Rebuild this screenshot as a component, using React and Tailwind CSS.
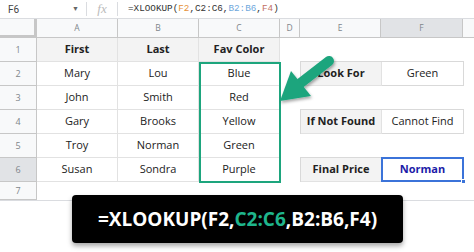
import React from "react"

const cols = ["A", "B", "C", "D", "E", "F"]
const colW = ["w-[81px]", "w-[81px]", "w-[81px]", "w-[20px]", "w-[81px]", "w-[82px]"]

const rows = [
  ["Mary", "Lou", "Blue"],
  ["John", "Smith", "Red"],
  ["Gary", "Brooks", "Yellow"],
  ["Troy", "Norman", "Green"],
  ["Susan", "Sondra", "Purple"],
]

const side = {
  0: ["Look For", "Green"],
  2: ["If Not Found", "Cannot Find"],
  4: ["Final Price", "Norman"],
}

const RowHead = ({ n, active }) => (
  <div
    className={`w-[37px] shrink-0 flex items-center justify-center text-[9px] text-[#80868b] border-r border-b border-[#c7c7c7] ${
      active ? "bg-[#e1e3e6]" : "bg-[#f8f9fa]"
    }`}
  >
    {n}
  </div>
)

const Cell = ({ w, bold, gray, children, className = "" }) => (
  <div
    className={`${w} shrink-0 flex items-center justify-center border-r border-b border-[#e2e2e2] ${
      gray ? "bg-[#f3f3f3]" : "bg-white"
    } ${bold ? "font-bold" : ""} ${className}`}
  >
    {children}
  </div>
)

export default function App() {
  return (
    <div className="relative w-[474px] h-[252px] overflow-hidden bg-white font-['Open_Sans',sans-serif] text-[11px] text-[#222]">
      {/* formula bar */}
      <div className="h-[19px] flex items-center border-b border-[#dadce0] text-[#444]">
        <div className="w-[86px] flex items-center justify-between pl-[8px] pr-[7px] font-['Roboto',sans-serif] text-[10px]">
          <span>F6</span>
          <span className="text-[7px] text-[#666]">▼</span>
        </div>
        <div className="w-[32px] h-[14px] flex items-center justify-center border-l border-r border-[#dadce0] font-['Liberation_Serif',serif] italic text-[13px] text-[#bbb]">
          fx
        </div>
        <div className="pl-[10px] font-['Liberation_Mono',monospace] text-[9.3px] text-[#333]">
          =XLOOKUP(<span className="text-[#e69138]">F2</span>,C2:C6,
          <span className="text-[#6fa8dc]">B2:B6</span>,<span className="text-[#c27062]">F4</span>)
        </div>
      </div>

      {/* column headers */}
      <div className="h-[19px] flex">
        <div className="w-[37px] shrink-0 bg-[#f8f9fa] border-r-[3px] border-b-[3px] border-[#c7c7c7]" />
        {cols.map((c, i) => (
          <div
            key={c}
            className={`${colW[i]} shrink-0 flex items-center justify-center text-[8.5px] text-[#80868b] border-r border-b border-[#c7c7c7] ${
              c === "F" ? "bg-[#e1e3e6]" : "bg-[#f8f9fa]"
            }`}
          >
            {c}
          </div>
        ))}
        <div className="flex-1 bg-[#f8f9fa] border-b border-[#c7c7c7]" />
      </div>

      {/* row 1 */}
      <div className="h-[24px] flex">
        <RowHead n={1} />
        <Cell w="w-[81px]" bold gray>First</Cell>
        <Cell w="w-[81px]" bold gray>Last</Cell>
        <Cell w="w-[81px]" bold gray>Fav Color</Cell>
      </div>

      {rows.map((r, i) => (
        <div key={i} className="h-[24px] flex">
          <RowHead n={i + 2} active={i === 4} />
          {r.map((v, j) => (
            <Cell key={j} w="w-[81px]">{v}</Cell>
          ))}
          <div className="w-[20px] shrink-0" />
          {side[i] ? (
            <div className="flex border-t border-l border-[#d9d9d9] -mt-px">
              <Cell w="w-[81px]" bold gray className="border-[#d9d9d9]">{side[i][0]}</Cell>
              <div
                className={`w-[82px] shrink-0 flex items-center justify-center border-r border-b border-[#d9d9d9] ${
                  i === 4 ? "relative font-bold text-[#1c1ca8]" : ""
                }`}
              >
                {side[i][1]}
                {i === 4 && (
                  <>
                    <div className="absolute -inset-[1px] border-2 border-[#3b73d9]" />
                    <div className="absolute -right-[3px] -bottom-[3px] w-[5px] h-[5px] bg-[#3b73d9] border border-white" />
                  </>
                )}
              </div>
            </div>
          ) : null}
        </div>
      ))}

      {/* row 7 */}
      <div className="h-[19px] flex border-b border-[#dadce0]">
        <RowHead n={7} />
      </div>

      {/* green range outline C2:C6 */}
      <div className="absolute left-[199px] top-[62px] w-[82px] h-[121px] border-2 border-[#1da57d]" />

      {/* arrow */}
      <svg className="absolute left-[270px] top-[50px]" width="75" height="62" viewBox="270 50 75 62">
        <defs>
          <filter id="sh" x="-30%" y="-30%" width="160%" height="160%">
            <feDropShadow dx="1" dy="2" stdDeviation="1.5" floodColor="#000" floodOpacity="0.35" />
          </filter>
        </defs>
        <g filter="url(#sh)" fill="#1da57d">
          <line x1="329" y1="61" x2="298" y2="85" stroke="#1da57d" strokeWidth="10" strokeLinecap="round" />
          <polygon points="280,101 291,71 311,96" />
        </g>
      </svg>

      {/* formula callout */}
      <div className="absolute left-[72px] top-[195px] w-[331px] h-[48px] rounded-[4px] bg-black shadow-[0_3px_5px_rgba(0,0,0,0.35)] flex items-center justify-center font-['Open_Sans',sans-serif] font-bold text-[19px] text-white">
        =XLOOKUP(F2,<span className="text-[#1fb58c]">C2:C6</span>,B2:B6,F4)
      </div>
    </div>
  )
}
